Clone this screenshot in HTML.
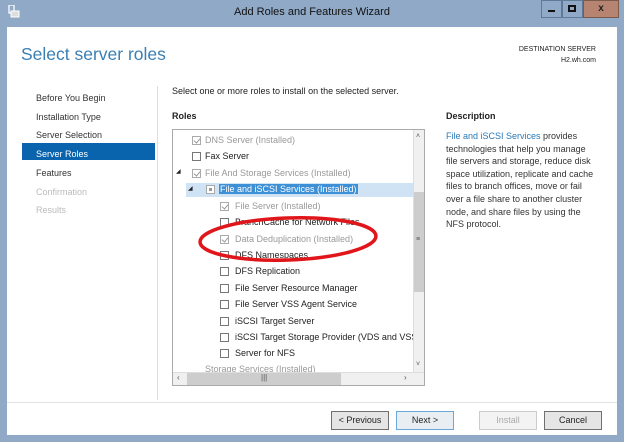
<!DOCTYPE html>
<html><head><style>
*{margin:0;padding:0;box-sizing:border-box}
body{width:624px;height:442px;background:#8fa9c6;position:relative;overflow:hidden;font-family:"Liberation Sans",sans-serif;font-size:9px;color:#222}
.a{position:absolute;white-space:nowrap}
.btn{position:absolute;height:19px;width:58px;border:1px solid #707070;background:#e5e5e5;text-align:center;line-height:17px;font-size:9px}
.cb{position:absolute;width:9px;height:9px;border:1px solid #777;background:#fff}
.cbg{border-color:#aaa}
.chk::after{content:"";position:absolute;left:2px;top:0px;width:3px;height:5px;border:solid #999;border-width:0 1.3px 1.3px 0;transform:rotate(40deg)}
.row{position:absolute;white-space:nowrap;font-size:9px}
.g{color:#999}
</style></head><body>
<div class="a" style="left:0;top:0;width:624px;height:27px;background:#8fa9c6"></div>
<svg class="a" style="left:8px;top:5px" width="12" height="13"><rect x="1" y="0" width="5" height="8" fill="none" stroke="#fff" stroke-width="1.3"/><rect x="3" y="6" width="8" height="6" fill="#ddd" stroke="#fff"/></svg>
<div class="a" style="left:0;top:6px;width:624px;text-align:center;font-size:11px;color:#111">Add Roles and Features Wizard</div>
<div class="a" style="left:541px;top:0;width:21px;height:18px;background:#8fa9c6;border:1px solid #5e7a98"></div>
<div class="a" style="left:548px;top:10px;width:7px;height:2px;background:#111"></div>
<div class="a" style="left:562px;top:0;width:21px;height:18px;background:#8fa9c6;border:1px solid #5e7a98"></div>
<div class="a" style="left:568px;top:5px;width:8px;height:7px;border:2px solid #111"></div>
<div class="a" style="left:583px;top:0;width:36px;height:18px;background:#b68470;border:1px solid #7a5a4a;text-align:center;font-size:10px;font-weight:bold;line-height:16px">x</div>
<div class="a" style="left:7px;top:27px;width:610px;height:408px;background:#fff"></div>
<div class="a" style="left:21px;top:44px;font-size:17.5px;color:#3a7fb3">Select server roles</div>
<div class="a" style="left:470px;top:44px;width:126px;text-align:right;font-size:7px;line-height:11px;color:#222">DESTINATION SERVER<br>H2.wh.com</div>
<div class="a" style="left:157px;top:86px;width:1px;height:314px;background:#ddd"></div>
<div class="a" style="left:22px;top:143px;width:133px;height:17px;background:#0a64ad"></div>
<div class="a" style="left:36px;top:89px;line-height:18.7px;font-size:9px;color:#333">Before You Begin<br>Installation Type<br>Server Selection<br><span style="color:#fff">Server Roles</span><br>Features<br><span style="color:#bbb">Confirmation</span><br><span style="color:#bbb">Results</span></div>
<div class="a" style="left:172px;top:86px;font-size:9px">Select one or more roles to install on the selected server.</div>
<div class="a" style="left:172px;top:111px;font-size:9px;font-weight:bold">Roles</div>
<div class="a" style="left:446px;top:111px;font-size:9px;font-weight:bold">Description</div>
<div class="a" style="left:446px;top:130px;width:153px;white-space:normal;font-size:9px;line-height:12.6px;color:#333"><span style="color:#2a7ab8">File and iSCSI Services</span> provides technologies that help you manage file servers and storage, reduce disk space utilization, replicate and cache files to branch offices, move or fail over a file share to another cluster node, and share files by using the NFS protocol.</div>
<div class="a" style="left:172px;top:129px;width:253px;height:257px;border:1px solid #aaa;overflow:hidden;background:#fff">
<div class="a" style="left:13px;top:53px;width:228px;height:14px;background:#cfe3f5"></div>
<div class="cb cbg chk" style="left:19px;top:6px"></div><div class="row g" style="left:32px;top:5px">DNS Server (Installed)</div>
<div class="cb" style="left:19px;top:22px"></div><div class="row" style="left:32px;top:21px">Fax Server</div>
<div class="row" style="left:3px;top:38px;font-size:6px">◢</div>
<div class="cb cbg chk" style="left:19px;top:39px"></div><div class="row g" style="left:32px;top:38px">File And Storage Services (Installed)</div>
<div class="row" style="left:15px;top:55px;font-size:6px">◢</div>
<div class="cb cbg" style="left:33px;top:55px"><div style="margin:2px;width:3px;height:3px;background:#999"></div></div>
<div class="row" style="left:46px;top:54px;background:#3d8fd6;color:#fff;padding:0 1px">File and iSCSI Services (Installed)</div>
<div class="cb cbg chk" style="left:47px;top:72px"></div><div class="row g" style="left:62px;top:71px">File Server (Installed)</div>
<div class="cb" style="left:47px;top:88px"></div><div class="row" style="left:62px;top:87px">BranchCache for Network Files</div>
<div class="cb cbg chk" style="left:47px;top:105px"></div><div class="row g" style="left:62px;top:104px">Data Deduplication (Installed)</div>
<div class="cb" style="left:47px;top:121px"></div><div class="row" style="left:62px;top:120px">DFS Namespaces</div>
<div class="cb" style="left:47px;top:137px"></div><div class="row" style="left:62px;top:136px">DFS Replication</div>
<div class="cb" style="left:47px;top:154px"></div><div class="row" style="left:62px;top:153px">File Server Resource Manager</div>
<div class="cb" style="left:47px;top:170px"></div><div class="row" style="left:62px;top:169px">File Server VSS Agent Service</div>
<div class="cb" style="left:47px;top:187px"></div><div class="row" style="left:62px;top:186px">iSCSI Target Server</div>
<div class="cb" style="left:47px;top:203px"></div><div class="row" style="left:62px;top:202px">iSCSI Target Storage Provider (VDS and VSS</div>
<div class="cb" style="left:47px;top:219px"></div><div class="row" style="left:62px;top:218px">Server for NFS</div>
<div class="row g" style="left:32px;top:234px">Storage Services (Installed)</div>
<div class="a" style="left:240px;top:0;width:12px;height:242px;background:#f0f0f0;border-left:1px solid #ddd"></div>
<div class="a" style="left:241px;top:62px;width:11px;height:100px;background:#cdcdcd"></div>
<div class="a" style="left:243px;top:3px;font-size:7px;color:#555">˄</div>
<div class="a" style="left:243px;top:231px;font-size:7px;color:#555">˅</div>
<div class="a" style="left:243px;top:106px;font-size:7px;color:#555">≡</div>
<div class="a" style="left:0;top:242px;width:253px;height:14px;background:#f0f0f0;border-top:1px solid #ddd"></div>
<div class="a" style="left:14px;top:243px;width:154px;height:12px;background:#cdcdcd"></div>
<div class="a" style="left:4px;top:243px;font-size:8px;color:#555">‹</div>
<div class="a" style="left:231px;top:243px;font-size:8px;color:#555">›</div>
<div class="a" style="left:88px;top:243px;font-size:8px;color:#555">|||</div>
</div>
<svg class="a" style="left:195px;top:212px" width="190" height="56"><ellipse cx="93" cy="27" rx="88" ry="21" fill="none" stroke="#e0161b" stroke-width="3.5" transform="rotate(-2 93 27)"/></svg>
<div class="a" style="left:7px;top:402px;width:610px;height:1px;background:#e3e3e3"></div>
<div class="btn" style="left:331px;top:411px">&lt; Previous</div>
<div class="btn" style="left:396px;top:411px;border-color:#6aa8dc;background:#e9eef3">Next &gt;</div>
<div class="btn" style="left:479px;top:411px;border-color:#ccc;background:#f3f3f3;color:#aaa">Install</div>
<div class="btn" style="left:544px;top:411px">Cancel</div>
</body></html>
